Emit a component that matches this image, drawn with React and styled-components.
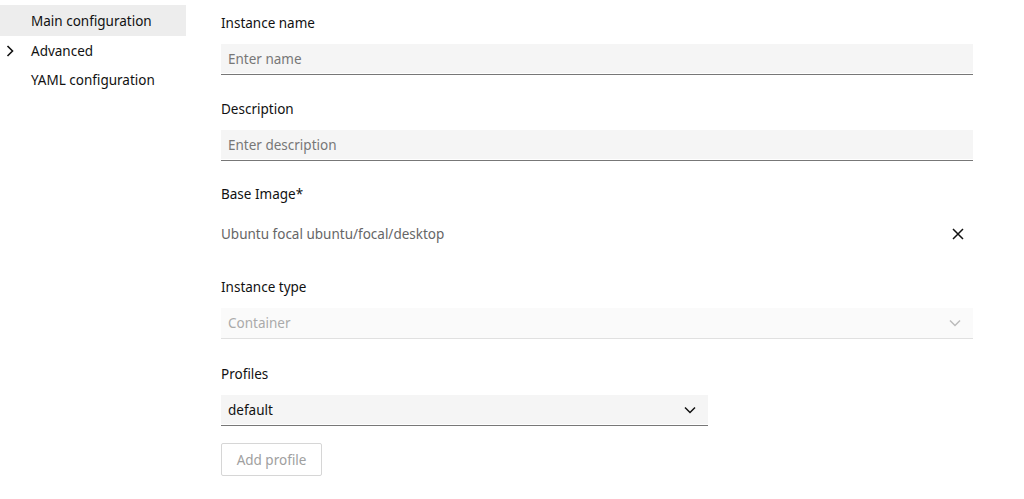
import React from "react";
import styled, { createGlobalStyle } from "styled-components";

const Global = createGlobalStyle`
  html, body { margin: 0; padding: 0; background: #fff; }
  body { font-family: "Noto Sans", "Open Sans", sans-serif; color: #111; -webkit-font-smoothing: antialiased; }
  * { box-sizing: border-box; }
`;

const Page = styled.div`
  display: flex;
  width: 1024px;
  height: 499px;
  overflow: hidden;
`;

const Sidebar = styled.nav`
  width: 186px;
  flex-shrink: 0;
  padding-top: 5px;
  display: flex;
  flex-direction: column;
`;

const NavItem = styled.div`
  position: relative;
  height: ${(p) => (p.$first ? 31 : 29.5)}px;
  display: flex;
  align-items: center;
  padding-left: 31px;
  font-size: 13.5px;
  color: #111;
  background: ${(p) => (p.$active ? "#ededed" : "transparent")};
`;

const Chevron = styled.svg`
  position: absolute;
  left: 6px;
  top: 50%;
  transform: translateY(-50%);
`;

const Main = styled.main`
  flex: 1;
  padding: 13px 51px 0 35px;
  display: flex;
  flex-direction: column;
`;

const Field = styled.div`
  display: flex;
  flex-direction: column;
  margin-bottom: ${(p) => p.$mb ?? 25}px;
`;

const Label = styled.label`
  font-size: 13.5px;
  line-height: 20px;
  color: #111;
  margin-bottom: 11px;
`;

const Input = styled.div`
  height: 31px;
  background: ${(p) => (p.$disabled ? "#fafafa" : "#f5f5f5")};
  border-bottom: 1px solid ${(p) => (p.$disabled ? "#e0e0e0" : "#777")};
  box-shadow: ${(p) => (p.$disabled ? "none" : "inset 0 -1px 0 #fff")};
  display: flex;
  align-items: center;
  justify-content: space-between;
  padding: 0 12px 0 7px;
  font-size: 13.5px;
  color: ${(p) => (p.$disabled ? "#aaa" : p.$value ? "#111" : "#777")};
  width: ${(p) => p.$w || "100%"};
`;

const ImageRow = styled.div`
  display: flex;
  align-items: center;
  justify-content: space-between;
  height: 38px;
  font-size: 13.5px;
  color: #666;
  padding-right: 9px;
`;

const Button = styled.button`
  align-self: flex-start;
  height: 33px;
  width: 101px;
  background: #fff;
  border: 1px solid #d6d6d6;
  border-radius: 2px;
  font-family: inherit;
  font-size: 13.5px;
  color: #a0a0a0;
  padding: 0;
`;

const Down = ({ color = "#111" }) => (
  <svg width="12" height="8" viewBox="0 0 12 8">
    <path d="M1 1.5 L6 6.5 L11 1.5" fill="none" stroke={color} strokeWidth="1.5" />
  </svg>
);

export default function App() {
  return (
    <>
      <Global />
      <Page>
        <Sidebar>
          <NavItem $active $first>Main configuration</NavItem>
          <NavItem>
            <Chevron width="8" height="12" viewBox="0 0 8 12">
              <path d="M1.5 1 L6.5 6 L1.5 11" fill="none" stroke="#111" strokeWidth="1.6" />
            </Chevron>
            Advanced
          </NavItem>
          <NavItem>YAML configuration</NavItem>
        </Sidebar>
        <Main>
          <Field $mb={24}>
            <Label>Instance name</Label>
            <Input>Enter name</Input>
          </Field>
          <Field $mb={23}>
            <Label>Description</Label>
            <Input>Enter description</Input>
          </Field>
          <Field $mb={24}>
            <Label>Base Image*</Label>
            <ImageRow>
              <span>Ubuntu focal ubuntu/focal/desktop</span>
              <svg width="12" height="12" viewBox="0 0 12 12">
                <path d="M1 1 L11 11 M11 1 L1 11" stroke="#111" strokeWidth="1.5" />
              </svg>
            </ImageRow>
          </Field>
          <Field $mb={25}>
            <Label>Instance type</Label>
            <Input $disabled>
              <span>Container</span>
              <Down color="#bbb" />
            </Input>
          </Field>
          <Field $mb={17}>
            <Label>Profiles</Label>
            <Input $value $w="487px">
              <span>default</span>
              <Down />
            </Input>
          </Field>
          <Button>Add profile</Button>
        </Main>
      </Page>
    </>
  );
}
